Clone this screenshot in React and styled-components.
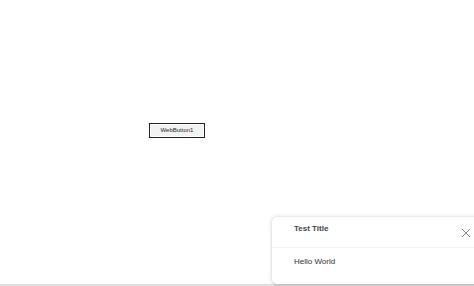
import React from "react";
import styled, { createGlobalStyle } from "styled-components";

const Global = createGlobalStyle`
  html, body { margin: 0; padding: 0; background: #fff; overflow: hidden; }
  body { font-family: "Liberation Sans", Arial, sans-serif; }
`;

const Page = styled.div`
  position: relative;
  width: 474px;
  height: 286px;
  display: flex;
  flex-direction: column;
`;

const Canvas = styled.div`
  flex: 1;
  padding: 123px 0 0 149px;
`;

const WebButton = styled.button`
  display: block;
  width: 56px;
  height: 15px;
  padding: 0;
  box-sizing: border-box;
  border: 1px solid #222;
  background: #f2f2f2;
  color: #222;
  font-family: "Liberation Sans", Arial, sans-serif;
  font-size: 6px;
  line-height: 13px;
  box-shadow: inset 0 0 0 1px #fff;
`;

const ScrollBar = styled.div`
  height: 2px;
  background: #dedede;
`;

const Toast = styled.div`
  position: absolute;
  left: 272px;
  top: 217px;
  width: 220px;
  height: 67px;
  background: #fff;
  border-radius: 5px;
  box-shadow: 0 0 4px rgba(0, 0, 0, 0.18), 0 1px 2px rgba(0, 0, 0, 0.08);
  display: flex;
  flex-direction: column;
`;

const ToastHeader = styled.div`
  height: 31px;
  box-sizing: border-box;
  padding: 6px 0 0 22px;
  border-bottom: 1px solid #f0f0f0;
  display: flex;
  justify-content: space-between;
`;

const Title = styled.div`
  font-size: 8px;
  font-weight: bold;
  color: #444;
  line-height: 10px;
  margin-top: 1px;
`;

const Close = styled.div`
  width: 10px;
  height: 10px;
  margin: 5px 21px 0 0;
  display: flex;
`;

const Body = styled.div`
  padding: 9px 0 0 22px;
  font-size: 8px;
  color: #333;
  line-height: 10px;
`;

export default function App() {
  return (
    <>
      <Global />
      <Page>
        <Canvas>
          <WebButton>WebButton1</WebButton>
        </Canvas>
        <ScrollBar />
        <Toast>
          <ToastHeader>
            <Title>Test Title</Title>
            <Close>
              <svg width="10" height="10" viewBox="0 0 10 10">
                <path d="M1 1 L9 9 M9 1 L1 9" stroke="#888" strokeWidth="1" fill="none" />
              </svg>
            </Close>
          </ToastHeader>
          <Body>Hello World</Body>
        </Toast>
      </Page>
    </>
  );
}
